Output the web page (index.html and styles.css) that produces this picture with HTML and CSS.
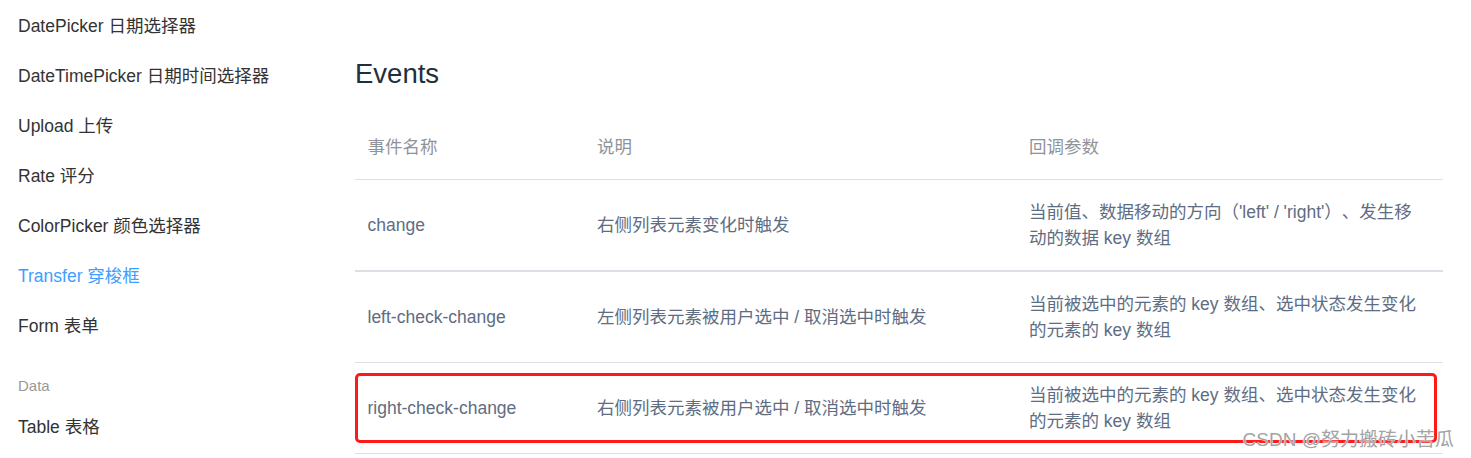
FILE: index.html
```html
<!DOCTYPE html>
<html lang="zh-CN">
<head>
<meta charset="utf-8">
<title>Transfer 穿梭框 - Events</title>
<link rel="stylesheet" href="styles.css">
</head>
<body>
<div class="page">
  <nav class="side">
    <a class="nav-item">DatePicker 日期选择器</a>
    <a class="nav-item">DateTimePicker 日期时间选择器</a>
    <a class="nav-item">Upload 上传</a>
    <a class="nav-item">Rate 评分</a>
    <a class="nav-item">ColorPicker 颜色选择器</a>
    <a class="nav-item active">Transfer 穿梭框</a>
    <a class="nav-item">Form 表单</a>
    <div class="nav-group">Data</div>
    <a class="nav-item">Table 表格</a>
  </nav>
  <main class="content">
    <h3 class="title">Events</h3>
    <div class="table-wrap">
      <table class="events">
        <colgroup>
          <col class="c1"><col class="c2"><col class="c3">
        </colgroup>
        <thead>
          <tr><th>事件名称</th><th>说明</th><th>回调参数</th></tr>
        </thead>
        <tbody>
          <tr class="thick">
            <td>change</td>
            <td>右侧列表元素变化时触发</td>
            <td>当前值、数据移动的方向（'left' / 'right'）、发生移动的数据 key 数组</td>
          </tr>
          <tr>
            <td>left-check-change</td>
            <td>左侧列表元素被用户选中 / 取消选中时触发</td>
            <td>当前被选中的元素的 key 数组、选中状态发生变化的元素的 key 数组</td>
          </tr>
          <tr>
            <td>right-check-change</td>
            <td>右侧列表元素被用户选中 / 取消选中时触发</td>
            <td>当前被选中的元素的 key 数组、选中状态发生变化的元素的 key 数组</td>
          </tr>
        </tbody>
      </table>
      <div class="highlight"></div>
    </div>
  </main>
</div>
<div class="watermark">CSDN @努力搬砖小苦瓜</div>
</body>
</html>
```
FILE: styles.css
```css
* { box-sizing: border-box; }
html, body { margin: 0; padding: 0; background: #fff; }
body {
  font-family: "Liberation Sans", "Noto Sans CJK SC", sans-serif;
  text-spacing-trim: space-all;
  width: 1471px;
  height: 458px;
  overflow: hidden;
  position: relative;
}
.page {
  display: flex;
  align-items: flex-start;
}
.side {
  width: 355px;
  flex: none;
  padding: 1px 0 0 18px;
  display: flex;
  flex-direction: column;
}
.nav-item {
  display: block;
  height: 50px;
  line-height: 50px;
  font-size: 17.5px;
  color: #333;
  white-space: nowrap;
}
.nav-item.active { color: #409eff; }
.nav-group {
  margin-top: 20px;
  height: 31px;
  line-height: 30px;
  font-size: 15px;
  color: #999;
}
.content {
  width: 1088px;
  flex: none;
}
.title {
  margin: 53.5px 0 0;
  height: 40px;
  line-height: 40px;
  font-size: 27.5px;
  font-weight: 400;
  color: #1f2f3d;
}
.table-wrap {
  position: relative;
  margin-top: 21.5px;
}
.events {
  width: 1088px;
  table-layout: fixed;
  border-collapse: collapse;
  border-spacing: 0;
  font-size: 17.5px;
  line-height: 26.25px;
}
.c1 { width: 229.5px; }
.c2 { width: 432px; }
.c3 { width: 426.5px; }
.events th {
  text-align: left;
  font-weight: 400;
  color: #909399;
  padding: 18.75px 12.5px;
  border-bottom: 1px solid #dcdfe6;
  white-space: nowrap;
}
.events td {
  color: #5e6d82;
  padding: 18.75px 12.5px;
  border-bottom: 1px solid #dcdfe6;
  vertical-align: middle;
}
.events td:last-child { padding-right: 19px; }
.events tr.thick td { border-bottom: 2px solid #dcdfe6; }
.highlight {
  position: absolute;
  left: 0;
  top: 258px;
  width: 1082px;
  height: 70px;
  border: 3px solid #ff1a1a;
  border-radius: 5px;
  pointer-events: none;
}
.watermark {
  position: absolute;
  right: 17px;
  top: 427px;
  font-size: 19px;
  line-height: 26px;
  color: #a3a3a3;
  text-shadow: 0 0 1px #fff, 0 0 1px #fff;
  white-space: nowrap;
}
```
